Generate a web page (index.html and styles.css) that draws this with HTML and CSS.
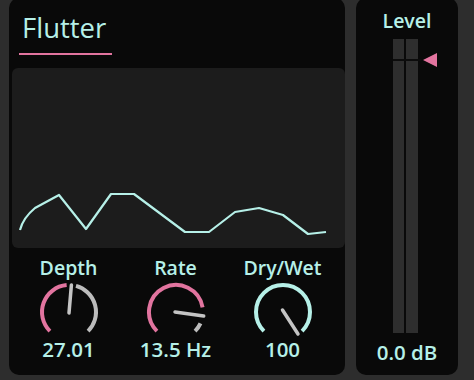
FILE: index.html
```html
<!DOCTYPE html>
<html lang="en">
<head>
    <meta charset="UTF-8">
    <title>Flutter</title>
    <link rel="stylesheet" href="styles.css">
</head>
<body>
    <div class="device">
        <div class="panel main">
            <div class="title"><span>Flutter</span></div>

            <div class="graph">
                <svg width="333" height="180" viewBox="0 0 333 180">
                    <path class="wave" d="M8 162 Q11 150 23 140 L47 127 L74 161 L99 126 L122 126 L173 164 L197 164 L223 144 L247 140 L271 147 L296 166 L314 164"/>
                </svg>
            </div>

            <div class="knobs">
                <div class="knob">
                    <div class="knob-label">Depth</div>
                    <svg width="64" height="64" viewBox="0 0 64 64">
                        <path class="arc pink" d="M12.91 51.09 A27 27 0 0 1 29.65 5.1"/>
                        <path class="arc grey" d="M38.99 5.92 A27 27 0 0 1 51.09 51.09"/>
                        <line class="needle" x1="32" y1="33" x2="34.4" y2="5"/>
                    </svg>
                    <div class="knob-value">27.01</div>
                </div>
                <div class="knob">
                    <div class="knob-label">Rate</div>
                    <svg width="64" height="64" viewBox="0 0 64 64">
                        <path class="arc pink" d="M12.91 51.09 A27 27 0 1 1 58.59 27.31"/>
                        <path class="arc grey" d="M56.47 43.41 A27 27 0 0 1 51.09 51.09"/>
                        <line class="needle" x1="31" y1="32" x2="59.7" y2="35.9"/>
                    </svg>
                    <div class="knob-value">13.5 Hz</div>
                </div>
                <div class="knob">
                    <div class="knob-label">Dry/Wet</div>
                    <svg width="64" height="64" viewBox="0 0 64 64">
                        <path class="arc cyan" d="M12.91 51.09 A27 27 0 1 1 51.09 51.09"/>
                        <line class="needle" x1="31.5" y1="30" x2="47" y2="54"/>
                    </svg>
                    <div class="knob-value">100</div>
                </div>
            </div>
        </div>

        <div class="panel level">
            <div class="level-label">Level</div>
            <div class="meter">
                <div class="bar"></div>
                <div class="bar wide"></div>
                <div class="marker"></div>
                <div class="pointer"></div>
            </div>
            <div class="level-value">0.0 dB</div>
        </div>
    </div>
</body>
</html>
```

FILE: styles.css
```css
body {
    margin: 0;
    background: #2d2d2d;
    font-family: 'Open Sans', 'Lato', sans-serif;
    font-weight: 600;
    color: #b6f0e8;
    overflow: hidden;
}

.device {
    display: flex;
    gap: 11px;
    padding-left: 9px;
    margin-top: -2px;
}

.panel {
    background: #090909;
    border-radius: 10px;
    height: 377px;
    box-sizing: border-box;
}

.main {
    width: 336px;
    display: flex;
    flex-direction: column;
}

/* Title */
.title {
    padding: 14px 0 0 10px;
}
.title span {
    display: inline-block;
    font-size: 27.5px;
    font-weight: 400;
    line-height: 31px;
    padding: 0 0 10px 3px;
    border-bottom: 2px solid #e2749f;
    width: 90px;
}

/* Graph */
.graph {
    margin: 13px 0 0 3px;
    height: 180px;
    background: #1c1c1c;
    border-radius: 6px;
}
.graph svg {
    display: block;
}
.wave {
    fill: none;
    stroke: #b6f0e8;
    stroke-width: 2.2;
    stroke-linejoin: round;
}

/* Knobs */
.knobs {
    display: grid;
    grid-template-columns: 107px 107px 107px;
    padding-left: 6px;
    margin-top: 8px;
}
.knob {
    display: flex;
    flex-direction: column;
    align-items: center;
}
.knob-label {
    font-size: 19.5px;
    line-height: 24px;
}
.knob svg {
    margin-top: 0;
}
.knob-value {
    font-size: 20.5px;
    line-height: 24px;
    margin-top: -7px;
}
.arc {
    fill: none;
    stroke-width: 4;
}
.pink { stroke: #e2749f; }
.grey { stroke: #bcbcbc; }
.cyan { stroke: #b6f0e8; }
.needle {
    stroke: #c4c4c4;
    stroke-width: 3.5;
    stroke-linecap: round;
}

/* Level */
.level {
    width: 102px;
    display: flex;
    flex-direction: column;
    align-items: center;
}
.level-label {
    font-size: 19.5px;
    line-height: 24px;
    margin-top: 11px;
}
.meter {
    position: relative;
    display: flex;
    gap: 2px;
    height: 294px;
    margin-top: 6px;
    align-self: flex-start;
    margin-left: 37px;
}
.bar {
    width: 11px;
    background: #2e2e2e;
}
.bar.wide {
    width: 12px;
}
.marker {
    position: absolute;
    left: 0;
    top: 20px;
    width: 28px;
    height: 2px;
    background: #0c0c0c;
}
.pointer {
    position: absolute;
    left: 30px;
    top: 14px;
    width: 0;
    height: 0;
    border-top: 7px solid transparent;
    border-bottom: 7px solid transparent;
    border-right: 14px solid #e2749f;
}
.level-value {
    font-size: 20.5px;
    line-height: 24px;
    margin-top: 7px;
}
```
